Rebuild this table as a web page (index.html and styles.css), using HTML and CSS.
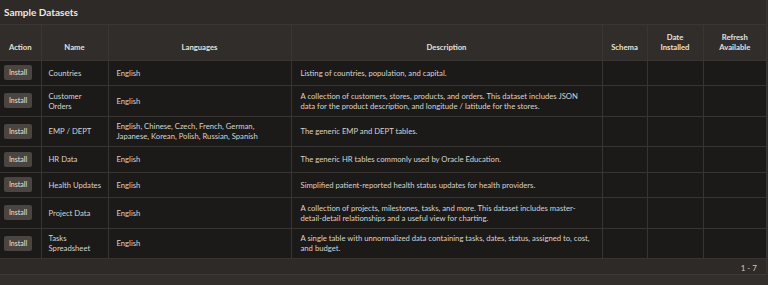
FILE: index.html
```html
<!DOCTYPE html>
<html lang="en">
<head>
<meta charset="utf-8">
<title>Sample Datasets</title>
<link rel="stylesheet" href="styles.css">
</head>
<body>
<section class="region">
  <h2 class="region-title">Sample Datasets</h2>
  <table class="report">
    <colgroup>
      <col class="c-action"><col class="c-name"><col class="c-lang"><col class="c-desc">
      <col class="c-schema"><col class="c-date"><col class="c-refresh">
    </colgroup>
    <thead>
      <tr>
        <th>Action</th>
        <th>Name</th>
        <th>Languages</th>
        <th>Description</th>
        <th>Schema</th>
        <th>Date<br>Installed</th>
        <th>Refresh<br>Available</th>
      </tr>
    </thead>
    <tbody>
      <tr>
        <td class="act"><button class="btn">Install</button></td>
        <td>Countries</td>
        <td>English</td>
        <td>Listing of countries, population, and capital.</td>
        <td></td><td></td><td></td>
      </tr>
      <tr>
        <td class="act"><button class="btn">Install</button></td>
        <td>Customer<br>Orders</td>
        <td>English</td>
        <td>A collection of customers, stores, products, and orders. This dataset includes JSON<br>data for the product description, and longitude / latitude for the stores.</td>
        <td></td><td></td><td></td>
      </tr>
      <tr>
        <td class="act"><button class="btn">Install</button></td>
        <td>EMP / DEPT</td>
        <td>English, Chinese, Czech, French, German,<br>Japanese, Korean, Polish, Russian, Spanish</td>
        <td>The generic EMP and DEPT tables.</td>
        <td></td><td></td><td></td>
      </tr>
      <tr>
        <td class="act"><button class="btn">Install</button></td>
        <td>HR Data</td>
        <td>English</td>
        <td>The generic HR tables commonly used by Oracle Education.</td>
        <td></td><td></td><td></td>
      </tr>
      <tr>
        <td class="act"><button class="btn">Install</button></td>
        <td>Health Updates</td>
        <td>English</td>
        <td>Simplified patient-reported health status updates for health providers.</td>
        <td></td><td></td><td></td>
      </tr>
      <tr>
        <td class="act"><button class="btn">Install</button></td>
        <td>Project Data</td>
        <td>English</td>
        <td>A collection of projects, milestones, tasks, and more. This dataset includes master-<br>detail-detail relationships and a useful view for charting.</td>
        <td></td><td></td><td></td>
      </tr>
      <tr>
        <td class="act"><button class="btn">Install</button></td>
        <td>Tasks<br>Spreadsheet</td>
        <td>English</td>
        <td>A single table with unnormalized data containing tasks, dates, status, assigned to, cost,<br>and budget.</td>
        <td></td><td></td><td></td>
      </tr>
    </tbody>
  </table>
  <div class="pager">1 - 7</div>
</section>
</body>
</html>
```

FILE: styles.css
```css
html, body {
  margin: 0;
  padding: 0;
  background: #332f2c;
  font-family: Lato, "Open Sans", sans-serif;
  color: #d8d3cd;
}

.region {
  width: 766px;
  background: #2e2a27;
  border-right: 1px solid #3a3633;
}

.region-title {
  margin: 0;
  height: 25px;
  box-sizing: border-box;
  padding: 6px 4px 0;
  font-size: 10px;
  font-weight: 700;
  line-height: 13px;
  color: #ece8e2;
  border-bottom: 1px solid #3a3633;
}

.report {
  width: 766px;
  border-collapse: collapse;
  table-layout: fixed;
  font-size: 7.7px;
  line-height: 10px;
}

.c-action { width: 41px; }
.c-name { width: 67px; }
.c-lang { width: 183px; }
.c-desc { width: 311px; }
.c-schema { width: 45px; }
.c-date { width: 56px; }
.c-refresh { width: 63px; }

.report th {
  background: #312d2a;
  color: #e6e1db;
  font-weight: 700;
  height: 35px;
  padding: 0 2px 8px;
  box-sizing: border-box;
  vertical-align: bottom;
  text-align: center;
  border-left: 1px solid #3a3633;
}

.report th:first-child { border-left: 0; }

.report td {
  background: #1c1a19;
  padding: 4.75px 7px 4.75px 8px;
  vertical-align: middle;
  white-space: nowrap;
  border-top: 1px solid #383431;
  border-left: 1px solid #383431;
}

.report td:nth-child(2) { padding-left: 7px; }
.report td:nth-child(4) { padding-left: 9px; }

.report td:first-child { border-left: 0; }

.report td.act {
  padding: 4.75px 4px;
}

.btn {
  display: block;
  width: 28px;
  height: 15px;
  padding: 0;
  border: 0;
  border-radius: 2px;
  background: #4a4541;
  color: #e8e4de;
  font-family: inherit;
  font-size: 7px;
  line-height: 15px;
  text-align: center;
}

.pager {
  height: 17px;
  box-sizing: border-box;
  padding: 4px 9px 0 0;
  text-align: right;
  font-size: 8px;
  line-height: 10px;
  color: #cfcac4;
  border-top: 1px solid #383431;
  border-bottom: 1px solid #3e3a36;
}
```
